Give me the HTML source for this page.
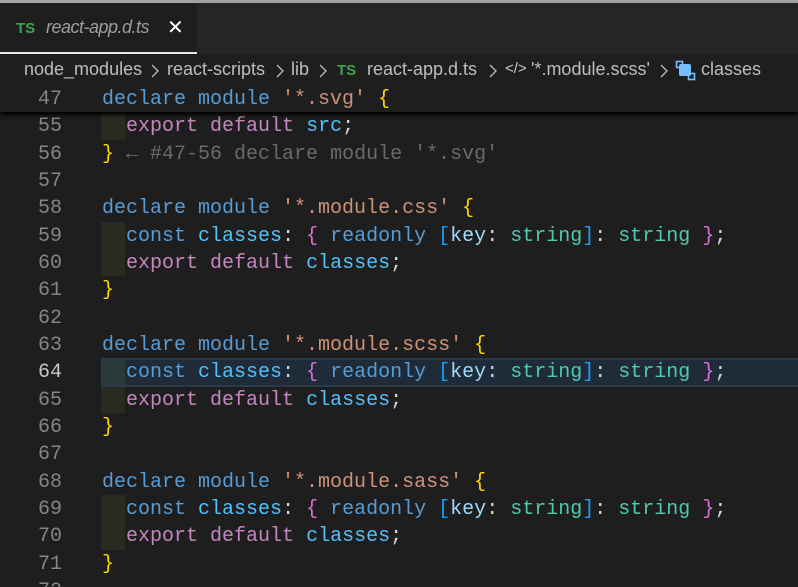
<!DOCTYPE html>
<html style="overflow:hidden;width:798px;height:587px"><head><meta charset="utf-8"><style>
*{margin:0;padding:0;box-sizing:border-box}
body{width:798px;height:587px;overflow:hidden;background:#1e1e1e;position:relative;font-family:"Liberation Sans",sans-serif}
.top{position:absolute;left:0;top:0;width:798px;height:3px;background:#a0a4a4}
.tabbar{position:absolute;left:0;top:3px;width:798px;height:51px;background:#252526}
.tab{position:absolute;left:0;top:0;width:197px;height:51px;background:#1e1e1e;border-bottom:2px solid #e8e8e8}
.ts{color:#3fa34d;font-weight:bold;font-size:15px}
.tab .ts{position:absolute;left:16px;top:17px}
.tab .name{position:absolute;left:46px;top:14px;font-style:italic;color:#9d9d9d;font-size:18px;letter-spacing:-0.5px}
.tab .x{position:absolute;left:167px;top:12px;color:#fff;font-size:20px}
.bc{position:absolute;left:0;top:54px;width:798px;height:32px;background:#1e1e1e;color:#bdbdbd;font-size:18px;white-space:nowrap}
.bc span{position:absolute;top:5px}
.bc svg.ch{position:absolute;top:10px}
.code{position:absolute;left:0;top:0;width:798px;height:587px;font-family:"Liberation Mono",monospace;font-size:20px;overflow:hidden}
.l{position:absolute;left:0;width:798px;height:27.33px;line-height:29px;white-space:pre}
.n{position:absolute;left:0;width:62px;text-align:right;color:#858585}
.t{position:absolute;left:102px}
.ig{position:absolute;left:101px;top:0;width:24px;height:27.33px;background:#2a2a21}
.sticky{background:#1e1e1e;box-shadow:0 3px 4px #000;z-index:2}
.selbox{position:absolute;left:101px;width:697px;height:29px;border:2px solid #2b3a4a;border-right:none;z-index:1}
.k{color:#569cd6}.s{color:#ce9178}.p{color:#c586c0}.v{color:#4fc1ff}.w{color:#d4d4d4}.y{color:#ffd700}.m{color:#da70d6}.b{color:#179fff}.ky{color:#9cdcfe}.ty{color:#4ec9b0}.c{color:#6a6a6a}
</style></head><body>
<div class="top"></div>
<div class="tabbar"><div class="tab"><span class="ts">TS</span><span class="name">react-app.d.ts</span><span class="x">✕</span></div></div>
<div class="bc">
<span style="left:24px">node_modules</span>
<svg class="ch" style="left:151px" width="8" height="14" viewBox="0 0 8 14"><path d="M1 1 L7 7 L1 13" fill="none" stroke="#bdbdbd" stroke-width="1.3"/></svg>
<span style="left:167px">react-scripts</span>
<svg class="ch" style="left:276px" width="8" height="14" viewBox="0 0 8 14"><path d="M1 1 L7 7 L1 13" fill="none" stroke="#bdbdbd" stroke-width="1.3"/></svg>
<span style="left:291px">lib</span>
<svg class="ch" style="left:319px" width="8" height="14" viewBox="0 0 8 14"><path d="M1 1 L7 7 L1 13" fill="none" stroke="#bdbdbd" stroke-width="1.3"/></svg>
<span class="ts" style="left:337px;top:8px">TS</span>
<span style="left:367px">react-app.d.ts</span>
<svg class="ch" style="left:489px" width="8" height="14" viewBox="0 0 8 14"><path d="M1 1 L7 7 L1 13" fill="none" stroke="#bdbdbd" stroke-width="1.3"/></svg>
<span style="left:505px;top:6px;font-size:15px;color:#ccc">&lt;/&gt;</span>
<span style="left:531px">'*.module.scss'</span>
<svg class="ch" style="left:660px" width="8" height="14" viewBox="0 0 8 14"><path d="M1 1 L7 7 L1 13" fill="none" stroke="#bdbdbd" stroke-width="1.3"/></svg>
<svg style="position:absolute;left:675px;top:6px" width="22" height="22" viewBox="0 0 22 22"><rect x="1.5" y="1.5" width="6" height="6" fill="none" stroke="#75beff" stroke-width="1.6"/><rect x="4" y="4" width="12" height="12" rx="2" fill="#75beff"/><rect x="13.5" y="13.5" width="6" height="6" fill="none" stroke="#75beff" stroke-width="1.6"/></svg>
<span style="left:701px">classes</span>
</div>
<div class="code">
<div class="l sticky" style="top:85px"><span class="n">47</span><span class="t"><span class="k">declare module</span> <span class="s">'*.svg'</span> <span class="y">{</span></span></div>
<div class="l" style="top:112.3px"><span class="ig"></span><span class="n">55</span><span class="t">  <span class="p">export default</span> <span class="v">src</span><span class="w">;</span></span></div>
<div class="l" style="top:139.7px"><span class="n">56</span><span class="t"><span class="y">}</span> <span class="c">← #47-56 declare module '*.svg'</span></span></div>
<div class="l" style="top:167px"><span class="n">57</span></div>
<div class="l" style="top:194.3px"><span class="n">58</span><span class="t"><span class="k">declare module</span> <span class="s">'*.module.css'</span> <span class="y">{</span></span></div>
<div class="l" style="top:221.7px"><span class="ig"></span><span class="n">59</span><span class="t">  <span class="k">const</span> <span class="v">classes</span><span class="w">:</span> <span class="m">{</span> <span class="k">readonly</span> <span class="b">[</span><span class="ky">key</span><span class="w">:</span> <span class="ty">string</span><span class="b">]</span><span class="w">:</span> <span class="ty">string</span> <span class="m">}</span><span class="w">;</span></span></div>
<div class="l" style="top:249px"><span class="ig"></span><span class="n">60</span><span class="t">  <span class="p">export default</span> <span class="v">classes</span><span class="w">;</span></span></div>
<div class="l" style="top:276.3px"><span class="n">61</span><span class="t"><span class="y">}</span></span></div>
<div class="l" style="top:303.7px"><span class="n">62</span></div>
<div class="l" style="top:331px"><span class="n">63</span><span class="t"><span class="k">declare module</span> <span class="s">'*.module.scss'</span> <span class="y">{</span></span></div>
<div class="selbox" style="top:357.5px"></div>
<div class="l" style="top:358.3px"><span style="position:absolute;left:101px;top:0;width:697px;height:27.33px;background:#1f2b39"></span><span class="ig" style="background:#2d3a3c"></span><span class="n" style="color:#c6c6c6">64</span><span class="t">  <span class="k">const</span> <span class="v">classes</span><span class="w">:</span> <span class="m">{</span> <span class="k">readonly</span> <span class="b">[</span><span class="ky">key</span><span class="w">:</span> <span class="ty">string</span><span class="b">]</span><span class="w">:</span> <span class="ty">string</span> <span class="m">}</span><span class="w">;</span></span></div>
<div class="l" style="top:385.7px"><span class="ig"></span><span class="n">65</span><span class="t">  <span class="p">export default</span> <span class="v">classes</span><span class="w">;</span></span></div>
<div class="l" style="top:413px"><span class="n">66</span><span class="t"><span class="y">}</span></span></div>
<div class="l" style="top:440.3px"><span class="n">67</span></div>
<div class="l" style="top:467.7px"><span class="n">68</span><span class="t"><span class="k">declare module</span> <span class="s">'*.module.sass'</span> <span class="y">{</span></span></div>
<div class="l" style="top:495px"><span class="ig"></span><span class="n">69</span><span class="t">  <span class="k">const</span> <span class="v">classes</span><span class="w">:</span> <span class="m">{</span> <span class="k">readonly</span> <span class="b">[</span><span class="ky">key</span><span class="w">:</span> <span class="ty">string</span><span class="b">]</span><span class="w">:</span> <span class="ty">string</span> <span class="m">}</span><span class="w">;</span></span></div>
<div class="l" style="top:522.3px"><span class="ig"></span><span class="n">70</span><span class="t">  <span class="p">export default</span> <span class="v">classes</span><span class="w">;</span></span></div>
<div class="l" style="top:549.7px"><span class="n">71</span><span class="t"><span class="y">}</span></span></div>
<div class="l" style="top:577px"><span class="n">72</span></div>
</div>
</body></html>
